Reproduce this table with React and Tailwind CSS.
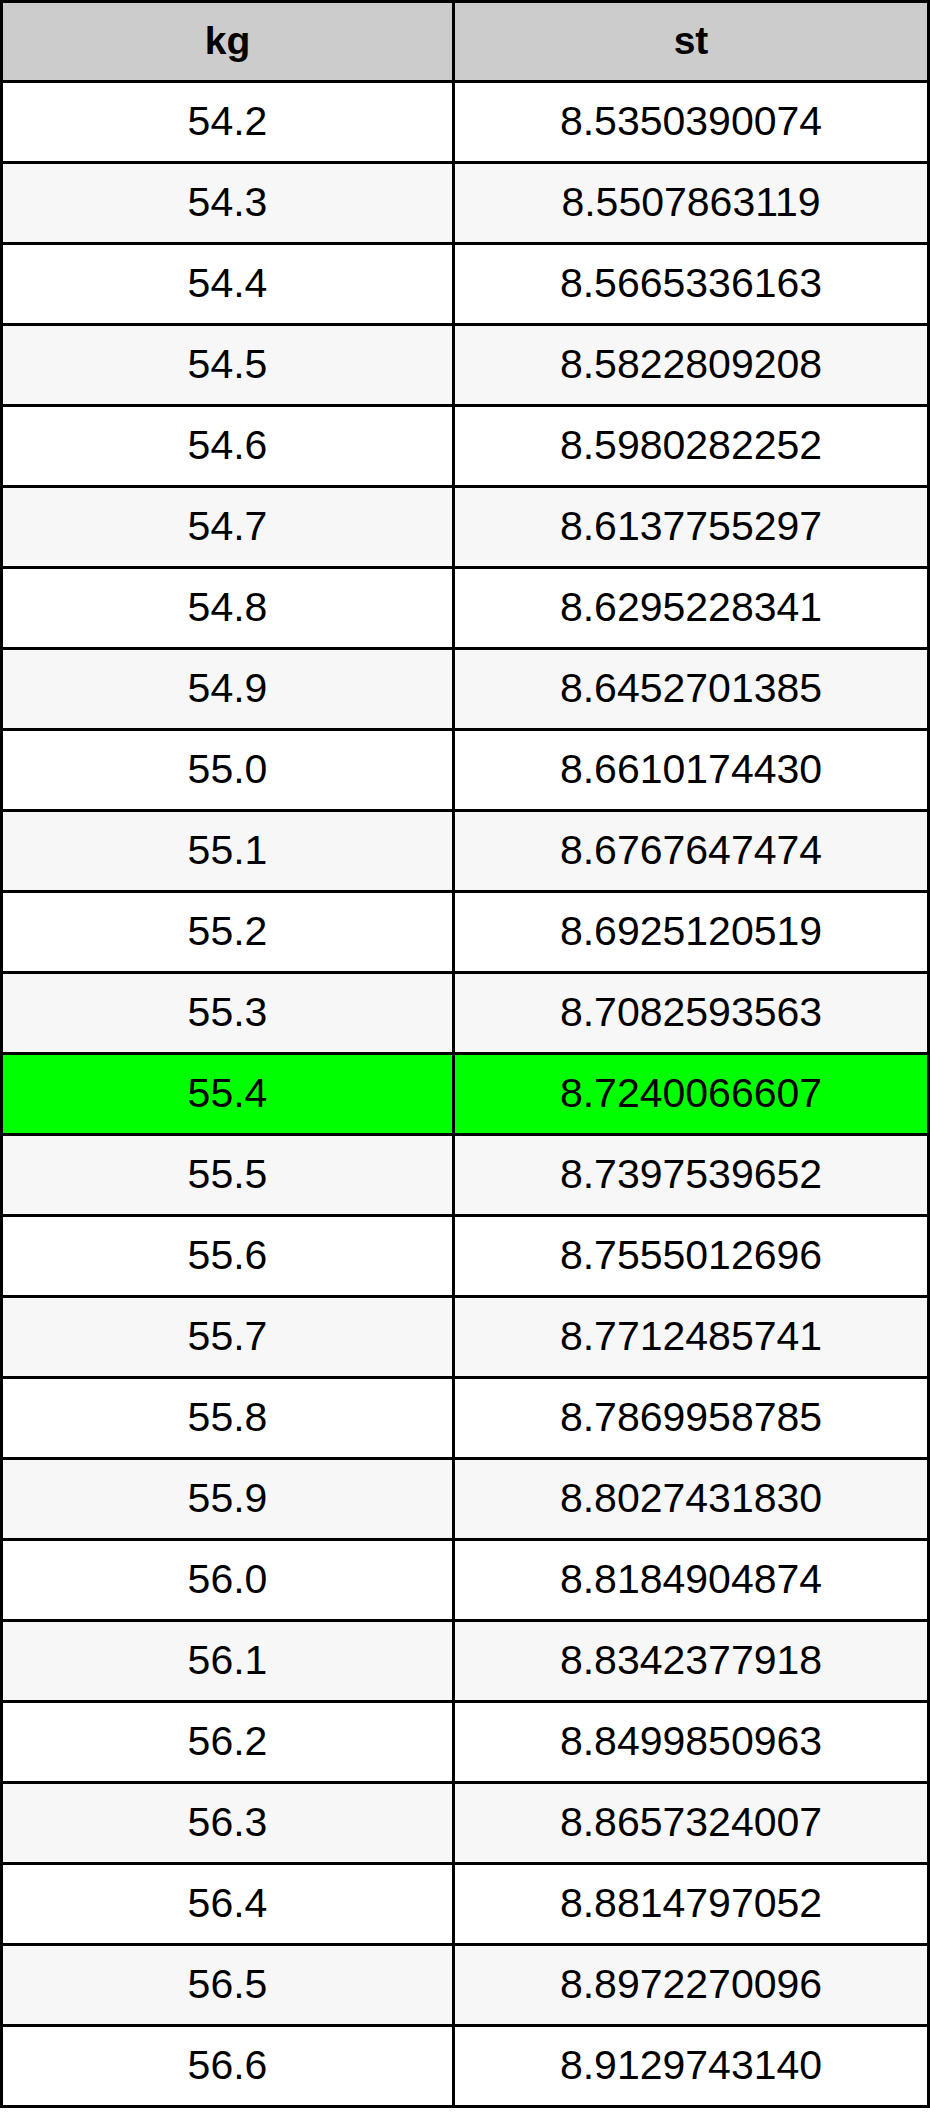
const rows = [
  ["54.2", "8.5350390074"],
  ["54.3", "8.5507863119"],
  ["54.4", "8.5665336163"],
  ["54.5", "8.5822809208"],
  ["54.6", "8.5980282252"],
  ["54.7", "8.6137755297"],
  ["54.8", "8.6295228341"],
  ["54.9", "8.6452701385"],
  ["55.0", "8.6610174430"],
  ["55.1", "8.6767647474"],
  ["55.2", "8.6925120519"],
  ["55.3", "8.7082593563"],
  ["55.4", "8.7240066607"],
  ["55.5", "8.7397539652"],
  ["55.6", "8.7555012696"],
  ["55.7", "8.7712485741"],
  ["55.8", "8.7869958785"],
  ["55.9", "8.8027431830"],
  ["56.0", "8.8184904874"],
  ["56.1", "8.8342377918"],
  ["56.2", "8.8499850963"],
  ["56.3", "8.8657324007"],
  ["56.4", "8.8814797052"],
  ["56.5", "8.8972270096"],
  ["56.6", "8.9129743140"],
];

export default function App() {
  return (
    <div className="w-[930px] h-[2115px] bg-white" style={{ fontFamily: '"Liberation Sans", Arial, sans-serif' }}>
      <div className="grid grid-cols-[449px_472px] gap-[3px] p-[3px] bg-black text-black">
        <div className="h-[77px] bg-[#cccccc] flex items-center justify-center font-bold text-[39px]">kg</div>
        <div className="h-[77px] bg-[#cccccc] flex items-center justify-center font-bold text-[39px]">st</div>
        {rows.map(([a, b], i) => {
          const bg = a === "55.4" ? "bg-[#00ff00]" : i % 2 === 1 ? "bg-[#f7f7f7]" : "bg-white";
          return [
            <div key={a + "a"} className={`h-[78px] ${bg} flex items-center justify-center text-[41px]`}>{a}</div>,
            <div key={a + "b"} className={`h-[78px] ${bg} flex items-center justify-center text-[41px]`}>{b}</div>,
          ];
        })}
      </div>
    </div>
  );
}
